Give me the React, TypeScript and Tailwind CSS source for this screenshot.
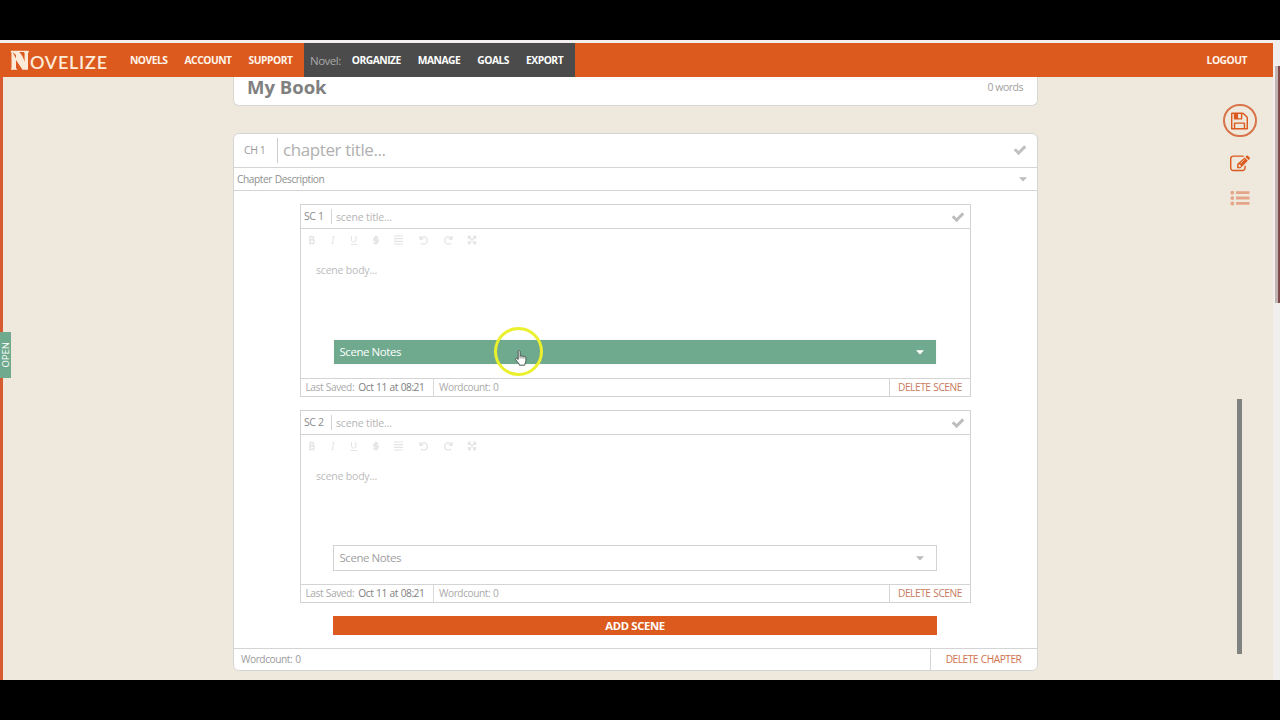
import React from "react";
import clsx from "clsx";

const navLinks = ["NOVELS", "ACCOUNT", "SUPPORT"];
const novelLinks = ["ORGANIZE", "MANAGE", "GOALS", "EXPORT"];
const scenes = [
  { id: 1, saved: "Oct 11 at 08:21", words: 0, active: true },
  { id: 2, saved: "Oct 11 at 08:21", words: 0, active: false },
];

const Check = ({ className }: { className: string }) => (
  <svg viewBox="0 0 1792 1792" fill="currentColor" className={className}>
    <path d="M1671 566q0 40-28 68l-724 724-136 136q-28 28-68 28t-68-28l-136-136-362-362q-28-28-28-68t28-68l136-136q28-28 68-28t68 28l294 295 656-657q28-28 68-28t68 28l136 136q28 28 28 68z" />
  </svg>
);

const Caret = ({ className }: { className: string }) => (
  <svg viewBox="0 0 8 5" fill="currentColor" className={className}>
    <path d="M0 0.3h8L4 4.6z" />
  </svg>
);

const Logo = () => (
  <div className="flex w-[130px] shrink-0 items-center pl-[10px] text-[#fdebd9]">
    <svg viewBox="0 0 19 20" className="h-5 w-[19px]">
      <path fill="currentColor" d="M0.500 0.800h18.300v1.400l-.8.800v16.800h-5.500L6 10v8l1.500 1.800H.8l.7-1.800V3z" />
      <path fill="#dc5a1e" d="M9.300 1.900h4.400l.9 1v9C13.700 8 12 4.800 9.300 1.900zM2.600 2.300C3.800 3 5 4.100 6 5.300V8.500z" />
    </svg>
    <span className="mt-[4px] ml-[1px] font-['Lato'] text-[18px] leading-5 font-semibold tracking-[0.750px]">
      OVELIZE
    </span>
  </div>
);

const Nav = () => (
  <nav className="flex h-[34px] shrink-0 items-center bg-[#dc5a1e] text-[10.300px] font-bold tracking-[-0.500px] text-[#fff4ea]">
    <Logo />
    <div className="flex w-[174px] shrink-0 gap-[17px] pt-px">
      {navLinks.map((link) => (
        <a key={link}>{link}</a>
      ))}
    </div>
    <div className="flex h-full w-[271px] items-center gap-[17px] bg-[#4b4b4b] pt-px pl-[6px] text-white">
      <span className="-mr-[6px] text-[11.500px] font-normal text-[#a9a9a9]">Novel:</span>
      {novelLinks.map((link) => (
        <a key={link}>{link}</a>
      ))}
    </div>
    <a className="mr-[26px] ml-auto pt-px">LOGOUT</a>
  </nav>
);

const Toolbar = () => (
  <svg viewBox="0 0 180 14" className="mt-1 ml-[4.500px] h-[14px] w-[180px] text-[#e4e4e4]" fill="none" stroke="currentColor" strokeWidth="1.500">
    <path d="M4 3.500v7h2.300a1.800 1.800 0 0 0 0-3.700H4h2a1.600 1.600 0 0 0 0-3.300H3.500" />
    <path strokeWidth="1" d="M26.500 3.500h2M25.500 10.500h2M27.500 3.500l-1 7" />
    <path strokeWidth="1" d="M45.500 3v4a2.200 2.200 0 0 0 4.400 0V3M44.500 11.500h6.500" />
    <path d="M72 5.200a2 1.500 0 1 0-2 1.800 2 1.700 0 1 1-2.200 1.700M70 2.500v9M67 7h6" />
    <path strokeWidth="1.200" d="M88 3h9M88 5.700h9M88 8.300h9M88 11h9" />
    <path strokeWidth="1.300" d="M114 3v3h3.200M114.500 5.500a3.700 3.700 0 1 1 .5 4.500" />
    <path strokeWidth="1.300" d="M146 3v3h-3.200M145.500 5.500a3.700 3.700 0 1 0-.5 4.500" />
    <path strokeWidth="1.300" d="M162.500 3.500l7 7M169.500 3.500l-7 7M162.500 6V3.500H165M167 3.500h2.500V6M162.500 8v2.500h2.500M167 10.500h2.500V8" />
  </svg>
);

const Scene = ({ id, saved, words, active }: (typeof scenes)[number]) => (
  <section className="flex h-[193px] w-[671px] flex-col border border-[#d0d4d4]">
    <header className="flex h-6 items-center border-b border-[#d4d4d4] pr-[5px] text-[10.500px]">
      <span className="w-[30px] pl-[3px] tracking-[-0.500px] text-[#8b8b8b] [word-spacing:0.500px]">SC {id}</span>
      <span className="flex h-[15px] items-center border-l border-[#d4d4d4] pt-[2px] pl-[4px] tracking-[-0.150px] text-[#b5b5b5]">
        scene title...
      </span>
      <Check className="ml-auto h-[14px] w-[14px] text-[#bdbdbd]" />
    </header>
    <Toolbar />
    <p className="mt-4 ml-[15px] text-[10.500px] leading-[14px] tracking-[-0.200px] text-[#bcbcbc]">scene body...</p>
    <div
      className={clsx(
        "mr-[33px] mb-[13px] ml-[32px] mt-auto flex h-[26px] items-center justify-between border pr-[12px] pl-[5.500px] text-[11.500px] tracking-[-0.450px]",
        active
          ? "border-[#fafafa] bg-[#70aa8e] text-white"
          : "border-[#d0d4d4] text-[#a0a0a0]"
      )}
    >
      <span>Scene Notes</span>
      <Caret className={clsx("h-[5px] w-2", active ? "text-white" : "text-[#bdbdbd]")} />
    </div>
    <footer className="flex h-[18px] shrink-0 border-t border-[#d4d4d4] text-[10.200px] leading-[17px] tracking-[-0.450px] text-[#aaaaaa] [word-spacing:0.500px]">
      <span className="w-[132px] pl-[4.500px] whitespace-nowrap">
        Last Saved: <b className="ml-[1.500px] font-normal text-[#808080]">{saved}</b>
      </span>
      <span className="border-l border-[#dadada] pl-[5px]">Wordcount: {words}</span>
      <a className="ml-auto w-[81px] border-l border-[#d4d4d4] text-center text-[#c97b5e]">
        DELETE SCENE
      </a>
    </footer>
  </section>
);

const SideTools = () => (
  <aside className="mt-[27px] mr-[16px] ml-auto flex w-[35px] flex-col items-center text-[#dc5a1e]">
    <div className="flex h-[33px] w-[34px] items-center justify-center rounded-full border-2 border-[#d8734a]">
      <svg viewBox="0 0 1536 1792" fill="currentColor" className="h-[20px] w-[17px]">
        <path d="M384 1536h768v-384H384v384zm896 0h128V640q0-14-10-38.500t-20-34.500l-281-281q-10-10-34-20t-39-10v416q0 40-28 68t-68 28H352q-40 0-68-28t-28-68V256H128v1280h128v-416q0-40 28-68t68-28h832q40 0 68 28t28 68v416zM896 608V288q0-13-9.500-22.500T864 256H672q-13 0-22.500 9.500T640 288v320q0 13 9.500 22.500t22.500 9.500h192q13 0 22.500-9.500T896 608zm640 32v928q0 40-28 68t-68 28H96q-40 0-68-28t-28-68V224q0-40 28-68t68-28h928q40 0 88 20t76 48l280 280q28 28 48 76t20 88z" />
      </svg>
    </div>
    <svg viewBox="0 0 1792 1792" fill="currentColor" className="mt-[17px] h-5 w-5">
      <path d="M888 1184l116-116-152-152-116 116v56h96v96h56zm440-720q-16-16-33 1L945 815q-17 17-1 33t33-1l350-350q17-17 1-33zm80 594v190q0 119-84.500 203.500T1120 1536H288q-119 0-203.500-84.500T0 1248V416q0-119 84.500-203.500T288 128h832q63 0 117 25 15 7 18 23 3 17-9 29l-49 49q-14 14-32 8-23-6-45-6H288q-66 0-113 47t-47 113v832q0 66 47 113t113 47h832q66 0 113-47t47-113v-126q0-13 9-22l64-64q15-15 35-7t20 29zm-96-738l288 288-672 672H640V896zm444 132l-92 92-288-288 92-92q28-28 68-28t68 28l152 152q28 28 28 68t-28 68z" />
    </svg>
    <svg viewBox="0 0 20 16" fill="currentColor" className="mt-4 h-4 w-5 text-[#e5a588]">
      <path d="M6 1.200h13.500v2.800H6zM6 6.600h13.500v2.800H6zM6 12h13.500v2.800H6z" />
      <circle cx="2.300" cy="2.700" r="1.900" />
      <circle cx="2.300" cy="8.100" r="1.900" />
      <circle cx="2.300" cy="13.500" r="1.900" />
    </svg>
    <div className="mt-[193px] h-[255px] w-[5px] bg-[#808280]" />
  </aside>
);

const Pointer = () => (
  <div className="absolute top-[327px] left-[494px] h-[49px] w-[49px] rounded-full border-[3px] border-[#eaf02c]">
    <svg viewBox="0 0 12 16" className="absolute top-[20px] left-[18px] h-4 w-3" fill="white" stroke="#3c4a44" strokeWidth="0.900" strokeLinejoin="round">
      <path d="M3.200 9.500V1.600c0-1.400 1.900-1.400 1.900 0v4.600c.2-1 1.900-.8 1.900.3.300-.8 1.900-.6 1.900.4.400-.8 2-.5 2 .8v3.100c0 2-1.200 2.600-1.200 4.400H4.400c0-1.800-2.600-3.600-3.700-5.600-.6-1.200.6-1.800 1.400-1z" />
      <path fill="none" strokeWidth="0.600" d="M5.100 6v2.500M7 6.600v2M8.900 7v1.800" />
    </svg>
  </div>
);

const App = () => {
  return (
    <div className="relative flex h-[720px] w-[1280px] flex-col overflow-hidden bg-black py-10 font-['Open_Sans',sans-serif]">
      <div className="flex h-[640px] bg-[#eee9dc]">
        <div className="flex w-[1273px] flex-col">
          <div className="h-[3px] shrink-0 bg-[#f3efee]" />
          <Nav />
          <div className="flex h-[603px] border-l-[3px] border-[#d85c32]">
            <main className="ml-[230px] w-[805px]">
              <div className="flex h-[29px] justify-between rounded-b-md border border-t-0 border-[#d8d8d4] bg-white pr-[14px] pl-[13px]">
                <h1 className="-mt-[2px] text-[18.500px] leading-6 font-bold text-[#808080]">My Book</h1>
                <span className="mt-[1px] text-[10.500px] leading-[18px] tracking-[-0.500px] text-[#a0a0a0]">0 words</span>
              </div>

              <article className="mt-[27px] h-[538px] rounded-md border border-[#d4d6d4] bg-white">
                <div className="flex h-[34px] items-center border-b border-[#d4d4d4] pr-[10px] pb-px">
                  <span className="w-[43px] pt-px pl-[10px] text-[10.500px] tracking-[-0.450px] text-[#999999]">CH 1</span>
                  <span className="flex h-[25px] items-center border-l border-[#cccccc] pl-[5px] text-[17px] tracking-[-0.400px] text-[#b0b0b0]">
                    chapter title...
                  </span>
                  <Check className="ml-auto h-[14px] w-[14px] text-[#c0c0c0]" />
                </div>
                <div className="flex h-[23px] items-center justify-between border-b border-[#d4d4d4] pr-[10px] pl-[3px] text-[10.200px] tracking-[-0.450px] text-[#8f8f8f] [word-spacing:0.700px]">
                  <span className="pt-px">Chapter Description</span>
                  <Caret className="h-[5px] w-2 text-[#bdbdbd]" />
                </div>
                <div className="mt-[13px] ml-[66px] flex flex-col gap-[13px]">
                  {scenes.map((scene) => (
                    <Scene key={scene.id} {...scene} />
                  ))}
                </div>
                <button className="mt-[13px] ml-[99px] block h-[19px] w-[604px] bg-[#dc5a1e] text-[11.300px] leading-[19px] font-bold tracking-[-0.350px] text-white">
                  ADD SCENE
                </button>
                <div className="mt-[13px] flex h-[22px] border-t border-[#d4d4d4] text-[10.200px] leading-[21px] tracking-[-0.450px] text-[#9b9b9b] [word-spacing:0.700px]">
                  <span className="pl-[7px]">Wordcount: 0</span>
                  <a className="ml-auto w-[107px] border-l border-[#d4d4d4] pr-px text-center tracking-[-0.500px] text-[#cf7350]">
                    DELETE CHAPTER
                  </a>
                </div>
              </article>
            </main>
            <SideTools />
          </div>
        </div>
        <div className="w-[7px] bg-[#f0efee]">
          <div className="mt-[26px] ml-[2px] h-[237px] border-l-[3px] border-[#c3b4b4] bg-[#814a4a]" />
        </div>
      </div>

      <div className="absolute top-[332px] left-0 flex h-[46px] w-[11px] items-center justify-center bg-[#70aa8e] text-white">
        <span className="rotate-180 text-[9.500px] leading-[11px] [writing-mode:vertical-rl]">OPEN</span>
      </div>
      <Pointer />
    </div>
  );
};

export default App;
